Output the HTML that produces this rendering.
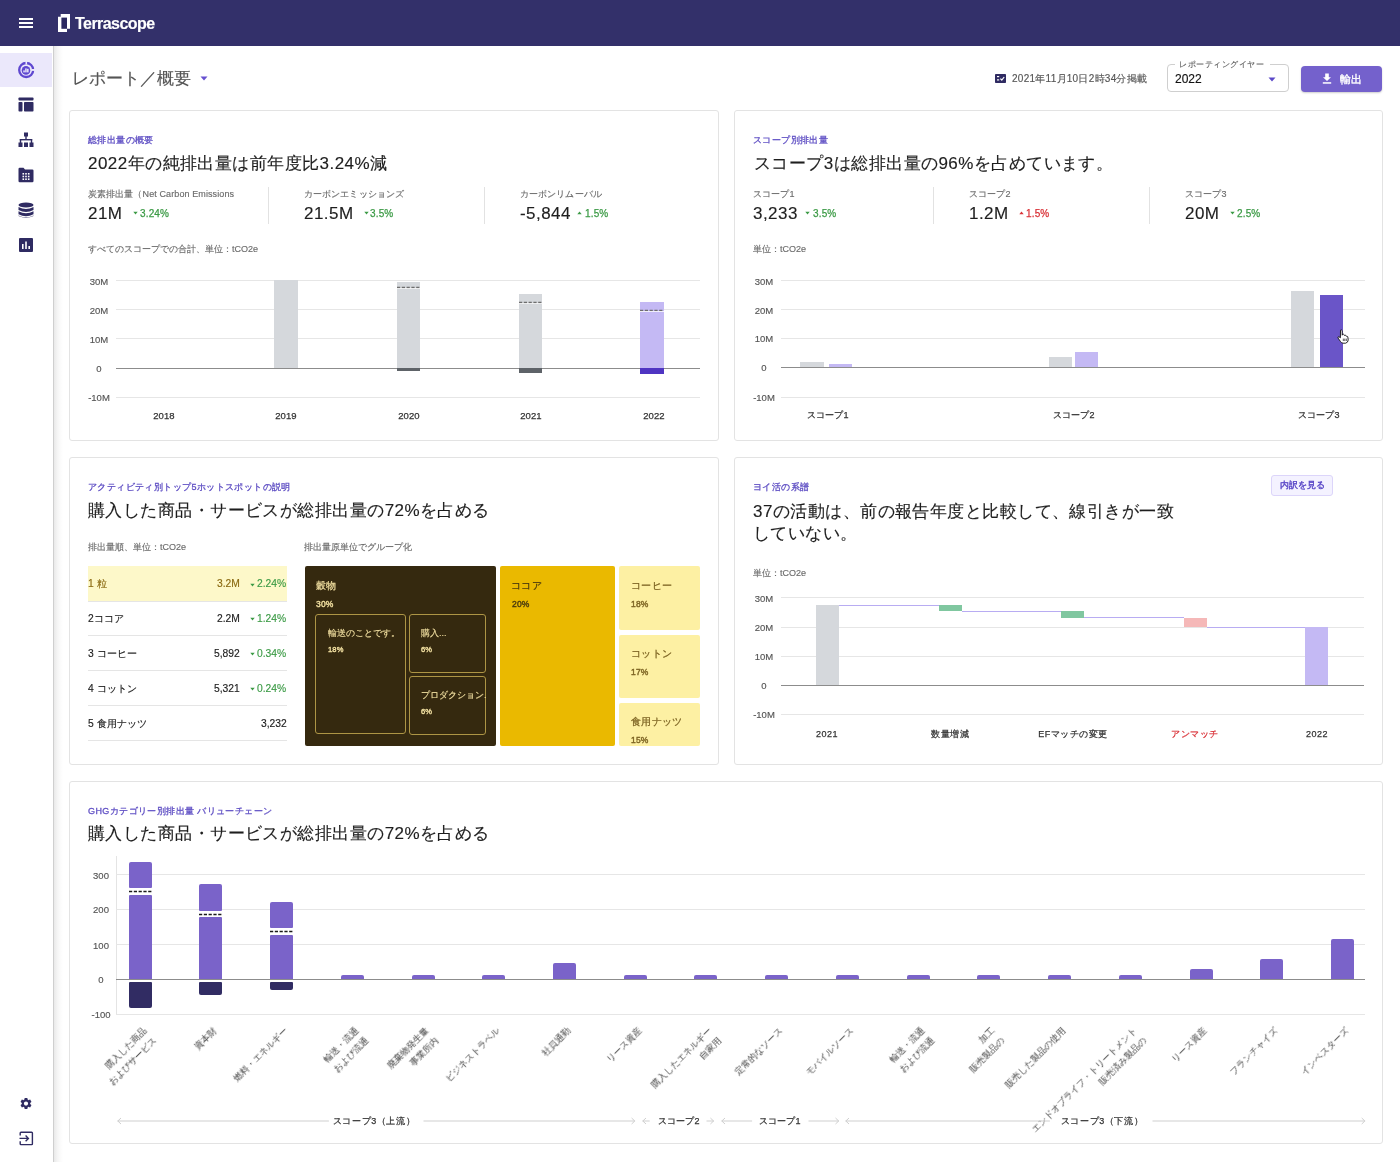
<!DOCTYPE html>
<html lang="ja"><head><meta charset="utf-8"><title>Terrascope</title>
<style>
*{box-sizing:border-box;margin:0;padding:0}
html,body{width:1400px;height:1162px;overflow:hidden;background:#fff;font-family:"Liberation Sans",sans-serif}
.t{position:absolute;white-space:nowrap;will-change:transform;-webkit-text-stroke:0.15px currentColor}
.a{position:absolute}
.card{position:absolute;border:1px solid #e3e3e3;border-radius:3px;background:#fff}
svg{position:absolute;overflow:visible}
</style></head><body>

<div class="a" style="left:0;top:0;width:1400px;height:46px;background:#33306a"></div>
<div class="a" style="left:19px;top:18px;width:14px;height:2px;background:#fff"></div>
<div class="a" style="left:19px;top:22px;width:14px;height:2px;background:#fff"></div>
<div class="a" style="left:19px;top:26px;width:14px;height:2px;background:#fff"></div>
<svg style="left:57px;top:13px" width="14" height="20" viewBox="0 0 14 20">
<path d="M1 3.7 L3.7 3.7 L3.7 1.1 L13 1.1 L13 15.8 L10 15.8 L10 19 L1 19 Z" fill="#fff"/>
<rect x="4.4" y="4.6" width="5.6" height="11.2" fill="#2a2760"/>
</svg>
<div class="t" style="left:75px;top:16.2px;font-size:16px;line-height:16px;color:#fff;font-weight:bold;letter-spacing:-0.55px;">Terrascope</div>
<div class="a" style="left:0;top:46px;width:53px;height:1116px;background:#fff"></div>
<div class="a" style="left:52.6px;top:46px;width:1.2px;height:1116px;background:#cfcfcf"></div>
<div class="a" style="left:53.8px;top:46px;width:9px;height:1116px;background:linear-gradient(to right,#e9e9e9,#f4f4f4 35%,#fafafa 65%,#fff)"></div>
<div class="a" style="left:0;top:53px;width:52px;height:34px;background:#ebe8fb"></div>
<svg style="left:17px;top:61px" width="18" height="18" viewBox="0 0 18 18">
<circle cx="9.2" cy="9" r="7" fill="none" stroke="#5f48d0" stroke-width="2.3"/>
<rect x="8.5" y="0" width="1.6" height="3.5" fill="#ebe8fb"/><rect x="14.5" y="8" width="3.5" height="1.9" fill="#ebe8fb"/>
<circle cx="9" cy="9.4" r="4.3" fill="#5f48d0"/>
<rect x="6.4" y="9.4" width="1.3" height="2" fill="#fff"/><rect x="8.3" y="7.4" width="1.3" height="4" fill="#fff"/><rect x="10.2" y="7.8" width="1.3" height="3.6" fill="#fff"/>
</svg>
<svg style="left:18px;top:97px" width="16" height="15" viewBox="0 0 16 15">
<rect x="0.5" y="0.5" width="15" height="3" rx="0.8" fill="#2f2b62"/>
<rect x="0.5" y="5" width="4" height="9.5" rx="0.8" fill="#2f2b62"/>
<rect x="6" y="5" width="9.5" height="9.5" rx="0.8" fill="#2f2b62"/>
</svg>
<svg style="left:18px;top:132px" width="16" height="16" viewBox="0 0 16 16">
<rect x="6" y="0.5" width="4" height="4" fill="#2f2b62"/>
<rect x="7.3" y="4" width="1.4" height="4" fill="#2f2b62"/>
<rect x="1.8" y="7" width="12.4" height="1.4" fill="#2f2b62"/>
<rect x="1.8" y="7" width="1.4" height="4" fill="#2f2b62"/><rect x="12.8" y="7" width="1.4" height="4" fill="#2f2b62"/>
<rect x="0.5" y="10.5" width="4" height="4.5" fill="#2f2b62"/><rect x="6" y="10.5" width="4" height="4.5" fill="#2f2b62"/><rect x="11.5" y="10.5" width="4" height="4.5" fill="#2f2b62"/>
</svg>
<svg style="left:18px;top:167px" width="16" height="16" viewBox="0 0 16 16">
<path d="M0.5 2 Q0.5 0.8 1.7 0.8 L5.5 0.8 L7 2.4 L14.3 2.4 Q15.5 2.4 15.5 3.6 L15.5 14 Q15.5 15.2 14.3 15.2 L1.7 15.2 Q0.5 15.2 0.5 14 Z" fill="#2f2b62"/>
<g fill="#fff"><rect x="4.5" y="6" width="1.6" height="1.6"/><rect x="7.2" y="6" width="1.6" height="1.6"/><rect x="9.9" y="6" width="1.6" height="1.6"/>
<rect x="4.5" y="8.7" width="1.6" height="1.6"/><rect x="7.2" y="8.7" width="1.6" height="1.6"/><rect x="9.9" y="8.7" width="1.6" height="1.6"/>
<rect x="4.5" y="11.4" width="1.6" height="1.6"/><rect x="7.2" y="11.4" width="1.6" height="1.6"/><rect x="9.9" y="11.4" width="1.6" height="1.6"/></g>
</svg>
<svg style="left:18px;top:202px" width="16" height="17" viewBox="0 0 16 17">
<ellipse cx="8" cy="3" rx="7.5" ry="2.6" fill="#2f2b62"/>
<path d="M0.5 5 Q8 9 15.5 5 L15.5 8 Q8 12 0.5 8 Z" fill="#2f2b62"/>
<path d="M0.5 9.2 Q8 13.2 15.5 9.2 L15.5 12.2 Q8 16.2 0.5 12.2 Z" fill="#2f2b62"/>
<path d="M0.5 13.4 Q8 17.2 15.5 13.4 L15.5 14 Q8 17.6 0.5 14 Z" fill="#2f2b62"/>
</svg>
<svg style="left:19px;top:238px" width="14" height="14" viewBox="0 0 14 14">
<rect x="0" y="0" width="14" height="14" rx="1" fill="#2f2b62"/>
<rect x="3" y="6" width="1.6" height="5" fill="#fff"/><rect x="6.2" y="3.5" width="1.6" height="7.5" fill="#fff"/><rect x="9.4" y="8" width="1.6" height="3" fill="#fff"/>
</svg>
<svg style="left:19px;top:1096px" width="14" height="15" viewBox="0 0 24 24">
<path fill="#2f2b62" d="M19.14 12.94c.04-.3.06-.61.06-.94 0-.32-.02-.64-.07-.94l2.03-1.58c.18-.14.23-.41.12-.61l-1.92-3.32c-.12-.22-.37-.29-.59-.22l-2.39.96c-.5-.38-1.03-.7-1.62-.94l-.36-2.54c-.04-.24-.24-.41-.48-.41h-3.84c-.24 0-.43.17-.47.41l-.36 2.54c-.59.24-1.13.57-1.62.94l-2.39-.96c-.22-.08-.47 0-.59.22L2.74 8.87c-.12.21-.08.47.12.61l2.03 1.58c-.05.3-.09.63-.09.94s.02.64.07.94l-2.03 1.58c-.18.14-.23.41-.12.61l1.92 3.32c.12.22.37.29.59.22l2.39-.96c.5.38 1.03.7 1.62.94l.36 2.54c.05.24.24.41.48.41h3.84c.24 0 .44-.17.47-.41l.36-2.54c.59-.24 1.13-.56 1.62-.94l2.39.96c.22.08.47 0 .59-.22l1.92-3.32c.12-.22.07-.47-.12-.61l-2.01-1.58zM12 15.6c-1.98 0-3.6-1.62-3.6-3.6s1.62-3.6 3.6-3.6 3.6 1.62 3.6 3.6-1.62 3.6-3.6 3.6z"/>
</svg>
<svg style="left:19px;top:1131px" width="15" height="15" viewBox="0 0 15 15">
<path d="M1.2 4.5 L1.2 2 Q1.2 1.2 2 1.2 L12.6 1.2 Q13.4 1.2 13.4 2 L13.4 12.8 Q13.4 13.6 12.6 13.6 L2 13.6 Q1.2 13.6 1.2 12.8 L1.2 10.2" fill="none" stroke="#2f2b62" stroke-width="1.4"/>
<path d="M0.5 7.4 L9.2 7.4 M6.6 4.6 L9.4 7.4 L6.6 10.2" fill="none" stroke="#2f2b62" stroke-width="1.4"/>
</svg>
<div class="t" style="left:71.5px;top:69.5px;font-size:17px;line-height:17px;color:#555;font-weight:normal;letter-spacing:0px;">レポート／概要</div>
<svg style="left:200px;top:76px" width="8" height="5" viewBox="0 0 8 5"><path d="M0.5 0.5 L7.5 0.5 L4 4.5 Z" fill="#6650d0"/></svg>
<svg style="left:995px;top:74px" width="11" height="9" viewBox="0 0 11 9">
<rect x="0" y="0" width="11" height="9" rx="0.8" fill="#2f2b62"/>
<rect x="2" y="2" width="2.2" height="1.2" fill="#fff"/><rect x="2" y="5.3" width="2.2" height="1.2" fill="#fff"/>
<path d="M5.4 4.6 L6.8 6 L9.2 3" fill="none" stroke="#fff" stroke-width="1.2"/>
</svg>
<div class="t" style="left:1012px;top:73.8px;font-size:10px;line-height:10px;color:#555;font-weight:normal;letter-spacing:0.27px;">2021年11月10日2時34分掲載</div>
<div class="a" style="left:1167px;top:64px;width:122px;height:28px;border:1px solid #cfcfcf;border-radius:4px"></div>
<div class="a" style="left:1175px;top:60px;width:95px;height:8px;background:#fff"></div>
<div class="t" style="left:1179px;top:60.5px;font-size:8px;line-height:8px;color:#666;font-weight:normal;letter-spacing:0.55px;">レポーティングイヤー</div>
<div class="t" style="left:1175px;top:73px;font-size:12px;line-height:12px;color:#111;font-weight:normal;letter-spacing:0px;">2022</div>
<svg style="left:1268px;top:77px" width="8" height="5" viewBox="0 0 8 5"><path d="M0.5 0.5 L7.5 0.5 L4 4.5 Z" fill="#5b48c8"/></svg>
<div class="a" style="left:1301px;top:66px;width:81px;height:26px;background:#7461cc;border-radius:4px;box-shadow:0 1px 2px rgba(0,0,0,0.2)"></div>
<svg style="left:1322px;top:73px" width="10" height="11" viewBox="0 0 10 11">
<path d="M3.2 0.5 L6.8 0.5 L6.8 4.2 L9 4.2 L5 8 L1 4.2 L3.2 4.2 Z" fill="#fff"/><rect x="0.8" y="9.2" width="8.4" height="1.5" fill="#fff"/>
</svg>
<div class="t" style="left:1340px;top:74px;font-size:10.5px;line-height:10.5px;color:#fff;font-weight:normal;letter-spacing:0.2px;-webkit-text-stroke:0.35px #fff">輸出</div>
<div class="card" style="left:69px;top:110px;width:650px;height:331px"></div>
<div class="t" style="left:88px;top:136px;font-size:9px;line-height:9px;color:#6050c4;font-weight:normal;letter-spacing:0.4px;-webkit-text-stroke:0.3px currentColor">総排出量の概要</div>
<div class="t" style="left:88px;top:155px;font-size:17px;line-height:17px;color:#1e1e1e;font-weight:normal;letter-spacing:0.45px;">2022年の純排出量は前年度比3.24%減</div>
<div class="t" style="left:88px;top:189.5px;font-size:9px;line-height:9px;color:#6b6b6b;font-weight:normal;letter-spacing:0.1px;">炭素排出量（Net Carbon Emissions</div>
<div class="t" style="left:88px;top:205px;font-size:17px;line-height:17px;color:#1e1e1e;font-weight:normal;letter-spacing:0.45px;">21M</div>
<svg style="left:133px;top:211px" width="5" height="4" viewBox="0 0 5 4"><path d="M0.3 0.8 L4.7 0.8 L2.5 3.4 Z" fill="#3b9a45"/></svg>
<div class="t" style="left:140px;top:208.5px;font-size:10px;line-height:10px;color:#3b9a45;font-weight:normal;letter-spacing:0.15px;-webkit-text-stroke:0.25px currentColor">3.24%</div>
<div class="t" style="left:304px;top:189.5px;font-size:9px;line-height:9px;color:#6b6b6b;font-weight:normal;letter-spacing:0.1px;">カーボンエミッションズ</div>
<div class="t" style="left:304px;top:205px;font-size:17px;line-height:17px;color:#1e1e1e;font-weight:normal;letter-spacing:0.45px;">21.5M</div>
<svg style="left:364px;top:211px" width="5" height="4" viewBox="0 0 5 4"><path d="M0.3 0.8 L4.7 0.8 L2.5 3.4 Z" fill="#3b9a45"/></svg>
<div class="t" style="left:370px;top:208.5px;font-size:10px;line-height:10px;color:#3b9a45;font-weight:normal;letter-spacing:0.15px;-webkit-text-stroke:0.25px currentColor">3.5%</div>
<div class="t" style="left:520px;top:189.5px;font-size:9px;line-height:9px;color:#6b6b6b;font-weight:normal;letter-spacing:0.1px;">カーボンリムーバル</div>
<div class="t" style="left:520px;top:205px;font-size:17px;line-height:17px;color:#1e1e1e;font-weight:normal;letter-spacing:0.45px;">-5,844</div>
<svg style="left:577px;top:211px" width="5" height="4" viewBox="0 0 5 4"><path d="M0.3 3.2 L4.7 3.2 L2.5 0.6 Z" fill="#3b9a45"/></svg>
<div class="t" style="left:585px;top:208.5px;font-size:10px;line-height:10px;color:#3b9a45;font-weight:normal;letter-spacing:0.15px;-webkit-text-stroke:0.25px currentColor">1.5%</div>
<div class="a" style="left:268px;top:187px;width:1px;height:37px;background:#e2e2e2"></div>
<div class="a" style="left:484px;top:187px;width:1px;height:37px;background:#e2e2e2"></div>
<div class="t" style="left:88px;top:245px;font-size:9px;line-height:9px;color:#6b6b6b;font-weight:normal;letter-spacing:0px;">すべてのスコープでの合計、単位：tCO2e</div>
<div class="a" style="left:116px;top:280.0px;width:584px;height:1px;background:#e6e6e6"></div>
<div class="t" style="left:-1px;width:200px;top:276.5px;font-size:9.5px;line-height:9.5px;color:#555;font-weight:normal;letter-spacing:0px;text-align:center;">30M</div>
<div class="a" style="left:116px;top:309.1px;width:584px;height:1px;background:#e6e6e6"></div>
<div class="t" style="left:-1px;width:200px;top:305.6px;font-size:9.5px;line-height:9.5px;color:#555;font-weight:normal;letter-spacing:0px;text-align:center;">20M</div>
<div class="a" style="left:116px;top:338.2px;width:584px;height:1px;background:#e6e6e6"></div>
<div class="t" style="left:-1px;width:200px;top:334.7px;font-size:9.5px;line-height:9.5px;color:#555;font-weight:normal;letter-spacing:0px;text-align:center;">10M</div>
<div class="a" style="left:116px;top:367.5px;width:584px;height:1.1px;background:#8c8c8c"></div>
<div class="t" style="left:-1px;width:200px;top:364px;font-size:9.5px;line-height:9.5px;color:#555;font-weight:normal;letter-spacing:0px;text-align:center;">0</div>
<div class="a" style="left:116px;top:396.5px;width:584px;height:1px;background:#e6e6e6"></div>
<div class="t" style="left:-1px;width:200px;top:393px;font-size:9.5px;line-height:9.5px;color:#555;font-weight:normal;letter-spacing:0px;text-align:center;">-10M</div>
<div class="a" style="left:274.2px;top:280.4px;width:23.400000000000034px;height:87.60000000000002px;background:#d5d8dc;"></div>
<div class="a" style="left:396.7px;top:281.8px;width:23.400000000000034px;height:86.19999999999999px;background:#d5d8dc;"></div>
<svg style="left:396.7px;top:285.5px" width="23.400000000000034" height="3"><line x1="0" y1="1.5" x2="23.400000000000034" y2="1.5" stroke="#6e6e6e" stroke-width="1.6" stroke-dasharray="3.2 1.6"/></svg>
<div class="a" style="left:396.7px;top:288.2px;width:23.400000000000034px;height:1px;background:rgba(255,255,255,0.7)"></div>
<div class="a" style="left:396.7px;top:368px;width:23.400000000000034px;height:2.8000000000000114px;background:#5e6368;"></div>
<div class="a" style="left:518.6px;top:293.6px;width:23.399999999999977px;height:74.39999999999998px;background:#d5d8dc;"></div>
<svg style="left:518.6px;top:300.5px" width="23.399999999999977" height="3"><line x1="0" y1="1.5" x2="23.399999999999977" y2="1.5" stroke="#6e6e6e" stroke-width="1.6" stroke-dasharray="3.2 1.6"/></svg>
<div class="a" style="left:518.6px;top:303.2px;width:23.399999999999977px;height:1px;background:rgba(255,255,255,0.7)"></div>
<div class="a" style="left:518.6px;top:368px;width:23.399999999999977px;height:5.199999999999989px;background:#5e6368;"></div>
<div class="a" style="left:640.2px;top:302.3px;width:23.399999999999977px;height:65.69999999999999px;background:#c4b9f4;"></div>
<svg style="left:640.2px;top:308.5px" width="23.399999999999977" height="3"><line x1="0" y1="1.5" x2="23.399999999999977" y2="1.5" stroke="#6e6e6e" stroke-width="1.6" stroke-dasharray="3.2 1.6"/></svg>
<div class="a" style="left:640.2px;top:311.3px;width:23.399999999999977px;height:1px;background:rgba(255,255,255,0.8)"></div>
<div class="a" style="left:640.2px;top:368px;width:23.399999999999977px;height:6.399999999999977px;background:#4f35c2;"></div>
<div class="t" style="left:63.5px;width:200px;top:411px;font-size:9.5px;line-height:9.5px;color:#333;font-weight:normal;letter-spacing:0.1px;text-align:center;-webkit-text-stroke:0.25px currentColor">2018</div>
<div class="t" style="left:186px;width:200px;top:411px;font-size:9.5px;line-height:9.5px;color:#333;font-weight:normal;letter-spacing:0.1px;text-align:center;-webkit-text-stroke:0.25px currentColor">2019</div>
<div class="t" style="left:308.5px;width:200px;top:411px;font-size:9.5px;line-height:9.5px;color:#333;font-weight:normal;letter-spacing:0.1px;text-align:center;-webkit-text-stroke:0.25px currentColor">2020</div>
<div class="t" style="left:431px;width:200px;top:411px;font-size:9.5px;line-height:9.5px;color:#333;font-weight:normal;letter-spacing:0.1px;text-align:center;-webkit-text-stroke:0.25px currentColor">2021</div>
<div class="t" style="left:553.5px;width:200px;top:411px;font-size:9.5px;line-height:9.5px;color:#333;font-weight:normal;letter-spacing:0.1px;text-align:center;-webkit-text-stroke:0.25px currentColor">2022</div>
<div class="card" style="left:734px;top:110px;width:649px;height:331px"></div>
<div class="t" style="left:753px;top:136px;font-size:9px;line-height:9px;color:#6050c4;font-weight:normal;letter-spacing:0.4px;-webkit-text-stroke:0.3px currentColor">スコープ別排出量</div>
<div class="t" style="left:754px;top:155px;font-size:17px;line-height:17px;color:#1e1e1e;font-weight:normal;letter-spacing:0.45px;">スコープ3は総排出量の96%を占めています。</div>
<div class="t" style="left:753px;top:189.5px;font-size:9px;line-height:9px;color:#6b6b6b;font-weight:normal;letter-spacing:0.1px;">スコープ1</div>
<div class="t" style="left:753px;top:205px;font-size:17px;line-height:17px;color:#1e1e1e;font-weight:normal;letter-spacing:0.45px;">3,233</div>
<svg style="left:805px;top:211px" width="5" height="4" viewBox="0 0 5 4"><path d="M0.3 0.8 L4.7 0.8 L2.5 3.4 Z" fill="#3b9a45"/></svg>
<div class="t" style="left:813px;top:208.5px;font-size:10px;line-height:10px;color:#3b9a45;font-weight:normal;letter-spacing:0.15px;-webkit-text-stroke:0.25px currentColor">3.5%</div>
<div class="t" style="left:969px;top:189.5px;font-size:9px;line-height:9px;color:#6b6b6b;font-weight:normal;letter-spacing:0.1px;">スコープ2</div>
<div class="t" style="left:969px;top:205px;font-size:17px;line-height:17px;color:#1e1e1e;font-weight:normal;letter-spacing:0.45px;">1.2M</div>
<svg style="left:1019px;top:211px" width="5" height="4" viewBox="0 0 5 4"><path d="M0.3 3.2 L4.7 3.2 L2.5 0.6 Z" fill="#d93036"/></svg>
<div class="t" style="left:1026px;top:208.5px;font-size:10px;line-height:10px;color:#d93036;font-weight:normal;letter-spacing:0.15px;-webkit-text-stroke:0.25px currentColor">1.5%</div>
<div class="t" style="left:1185px;top:189.5px;font-size:9px;line-height:9px;color:#6b6b6b;font-weight:normal;letter-spacing:0.1px;">スコープ3</div>
<div class="t" style="left:1185px;top:205px;font-size:17px;line-height:17px;color:#1e1e1e;font-weight:normal;letter-spacing:0.45px;">20M</div>
<svg style="left:1230px;top:211px" width="5" height="4" viewBox="0 0 5 4"><path d="M0.3 0.8 L4.7 0.8 L2.5 3.4 Z" fill="#3b9a45"/></svg>
<div class="t" style="left:1237px;top:208.5px;font-size:10px;line-height:10px;color:#3b9a45;font-weight:normal;letter-spacing:0.15px;-webkit-text-stroke:0.25px currentColor">2.5%</div>
<div class="a" style="left:932.5px;top:187px;width:1px;height:37px;background:#e2e2e2"></div>
<div class="a" style="left:1148.5px;top:187px;width:1px;height:37px;background:#e2e2e2"></div>
<div class="t" style="left:753px;top:245px;font-size:9px;line-height:9px;color:#6b6b6b;font-weight:normal;letter-spacing:0px;">単位：tCO2e</div>
<div class="a" style="left:781px;top:280.0px;width:584px;height:1px;background:#e6e6e6"></div>
<div class="t" style="left:664px;width:200px;top:276.5px;font-size:9.5px;line-height:9.5px;color:#555;font-weight:normal;letter-spacing:0px;text-align:center;">30M</div>
<div class="a" style="left:781px;top:309.1px;width:584px;height:1px;background:#e6e6e6"></div>
<div class="t" style="left:664px;width:200px;top:305.6px;font-size:9.5px;line-height:9.5px;color:#555;font-weight:normal;letter-spacing:0px;text-align:center;">20M</div>
<div class="a" style="left:781px;top:337.9px;width:584px;height:1px;background:#e6e6e6"></div>
<div class="t" style="left:664px;width:200px;top:334.4px;font-size:9.5px;line-height:9.5px;color:#555;font-weight:normal;letter-spacing:0px;text-align:center;">10M</div>
<div class="a" style="left:781px;top:366.9px;width:584px;height:1.1px;background:#8c8c8c"></div>
<div class="t" style="left:664px;width:200px;top:363.4px;font-size:9.5px;line-height:9.5px;color:#555;font-weight:normal;letter-spacing:0px;text-align:center;">0</div>
<div class="a" style="left:781px;top:396.5px;width:584px;height:1px;background:#e6e6e6"></div>
<div class="t" style="left:664px;width:200px;top:393px;font-size:9.5px;line-height:9.5px;color:#555;font-weight:normal;letter-spacing:0px;text-align:center;">-10M</div>
<div class="a" style="left:800.4px;top:361.5px;width:23.200000000000045px;height:5.899999999999977px;background:#d5d8dc;"></div>
<div class="a" style="left:829.2px;top:363.6px;width:23.0px;height:3.7999999999999545px;background:#c4b9f4;"></div>
<div class="a" style="left:1048.6px;top:357px;width:23.200000000000045px;height:10.399999999999977px;background:#d5d8dc;"></div>
<div class="a" style="left:1074.7px;top:352px;width:23.0px;height:15.399999999999977px;background:#c4b9f4;"></div>
<div class="a" style="left:1290.6px;top:290.7px;width:23.200000000000045px;height:76.69999999999999px;background:#d5d8dc;"></div>
<div class="a" style="left:1319.7px;top:295.3px;width:23.0px;height:72.09999999999997px;background:#6a55c8;"></div>
<div class="t" style="left:728px;width:200px;top:411px;font-size:9px;line-height:9px;color:#333;font-weight:normal;letter-spacing:0px;text-align:center;-webkit-text-stroke:0.25px currentColor">スコープ1</div>
<div class="t" style="left:973.5px;width:200px;top:411px;font-size:9px;line-height:9px;color:#333;font-weight:normal;letter-spacing:0px;text-align:center;-webkit-text-stroke:0.25px currentColor">スコープ2</div>
<div class="t" style="left:1218.5px;width:200px;top:411px;font-size:9px;line-height:9px;color:#333;font-weight:normal;letter-spacing:0px;text-align:center;-webkit-text-stroke:0.25px currentColor">スコープ3</div>
<svg style="left:1337px;top:329px" width="13" height="15" viewBox="0 0 13 15">
<path d="M3.5 1.2 Q4.6 0.6 5.2 1.6 L5.2 6.2 L5.6 5.4 Q6.6 4.8 7.2 5.8 L7.4 6.4 Q8.4 5.8 9 6.8 L9.2 7.2 Q10.2 6.8 10.8 7.8 L11.2 11 Q11 13.6 8.6 14.2 L6 14.2 Q4.4 14 3.4 12.4 L1 9 Q0.6 7.8 1.8 7.6 L3.4 8.8 Z" fill="#fff" stroke="#111" stroke-width="0.9"/>
<path d="M6.3 9.6 L6.3 12 M7.8 9.6 L7.8 12 M9.3 9.6 L9.3 12" stroke="#111" stroke-width="0.7"/>
</svg>
<div class="card" style="left:69px;top:457px;width:650px;height:308px"></div>
<div class="t" style="left:88px;top:483px;font-size:9px;line-height:9px;color:#6050c4;font-weight:normal;letter-spacing:0.4px;-webkit-text-stroke:0.3px currentColor">アクティビティ別トップ5ホットスポットの説明</div>
<div class="t" style="left:88px;top:501.5px;font-size:17px;line-height:17px;color:#1e1e1e;font-weight:normal;letter-spacing:0.45px;">購入した商品・サービスが総排出量の72%を占める</div>
<div class="t" style="left:88px;top:542.5px;font-size:9px;line-height:9px;color:#6b6b6b;font-weight:normal;letter-spacing:0px;">排出量順、単位：tCO2e</div>
<div class="t" style="left:304px;top:542.5px;font-size:9px;line-height:9px;color:#6b6b6b;font-weight:normal;letter-spacing:0px;">排出量原単位でグループ化</div>
<div class="a" style="left:88px;top:566px;width:198.5px;height:34.5px;background:#fdf8c9;"></div>
<div class="a" style="left:88px;top:600.5px;width:198.5px;height:1px;background:#e5e5e5"></div>
<div class="t" style="left:88px;top:579.0px;font-size:10.3px;line-height:10.3px;color:#8a6a12;font-weight:normal;letter-spacing:0px;">1 粒</div>
<div class="t" style="right:1160.2px;top:579.0px;font-size:10.3px;line-height:10.3px;color:#8a6a12;font-weight:normal;letter-spacing:0px;text-align:right;">3.2M</div>
<svg style="left:250px;top:582.5px" width="5" height="4" viewBox="0 0 5 4"><path d="M0.3 0.8 L4.7 0.8 L2.5 3.4 Z" fill="#3b9a45"/></svg>
<div class="t" style="right:1113.7px;top:579.0px;font-size:10.3px;line-height:10.3px;color:#3b9a45;font-weight:normal;letter-spacing:0px;text-align:right;">2.24%</div>
<div class="a" style="left:88px;top:635.4px;width:198.5px;height:1px;background:#e5e5e5"></div>
<div class="t" style="left:88px;top:613.9px;font-size:10.3px;line-height:10.3px;color:#222;font-weight:normal;letter-spacing:0px;">2ココア</div>
<div class="t" style="right:1160.2px;top:613.9px;font-size:10.3px;line-height:10.3px;color:#222;font-weight:normal;letter-spacing:0px;text-align:right;">2.2M</div>
<svg style="left:250px;top:617.4px" width="5" height="4" viewBox="0 0 5 4"><path d="M0.3 0.8 L4.7 0.8 L2.5 3.4 Z" fill="#3b9a45"/></svg>
<div class="t" style="right:1113.7px;top:613.9px;font-size:10.3px;line-height:10.3px;color:#3b9a45;font-weight:normal;letter-spacing:0px;text-align:right;">1.24%</div>
<div class="a" style="left:88px;top:670.3px;width:198.5px;height:1px;background:#e5e5e5"></div>
<div class="t" style="left:88px;top:648.8px;font-size:10.3px;line-height:10.3px;color:#222;font-weight:normal;letter-spacing:0px;">3 コーヒー</div>
<div class="t" style="right:1160.2px;top:648.8px;font-size:10.3px;line-height:10.3px;color:#222;font-weight:normal;letter-spacing:0px;text-align:right;">5,892</div>
<svg style="left:250px;top:652.3px" width="5" height="4" viewBox="0 0 5 4"><path d="M0.3 0.8 L4.7 0.8 L2.5 3.4 Z" fill="#3b9a45"/></svg>
<div class="t" style="right:1113.7px;top:648.8px;font-size:10.3px;line-height:10.3px;color:#3b9a45;font-weight:normal;letter-spacing:0px;text-align:right;">0.34%</div>
<div class="a" style="left:88px;top:705.2px;width:198.5px;height:1px;background:#e5e5e5"></div>
<div class="t" style="left:88px;top:683.7px;font-size:10.3px;line-height:10.3px;color:#222;font-weight:normal;letter-spacing:0px;">4 コットン</div>
<div class="t" style="right:1160.2px;top:683.7px;font-size:10.3px;line-height:10.3px;color:#222;font-weight:normal;letter-spacing:0px;text-align:right;">5,321</div>
<svg style="left:250px;top:687.2px" width="5" height="4" viewBox="0 0 5 4"><path d="M0.3 0.8 L4.7 0.8 L2.5 3.4 Z" fill="#3b9a45"/></svg>
<div class="t" style="right:1113.7px;top:683.7px;font-size:10.3px;line-height:10.3px;color:#3b9a45;font-weight:normal;letter-spacing:0px;text-align:right;">0.24%</div>
<div class="a" style="left:88px;top:740.1px;width:198.5px;height:1px;background:#e5e5e5"></div>
<div class="t" style="left:88px;top:718.6px;font-size:10.3px;line-height:10.3px;color:#222;font-weight:normal;letter-spacing:0px;">5 食用ナッツ</div>
<div class="t" style="right:1113.7px;top:718.6px;font-size:10.3px;line-height:10.3px;color:#222;font-weight:normal;letter-spacing:0px;text-align:right;">3,232</div>
<div class="a" style="left:304.5px;top:566px;width:191.5px;height:180px;background:#35290f;border-radius:2px"></div>
<div class="t" style="left:315.5px;top:580.5px;font-size:10px;line-height:10px;color:#f1dfa0;font-weight:normal;letter-spacing:0.3px;-webkit-text-stroke:0.25px currentColor">穀物</div>
<div class="t" style="left:315.5px;top:599.5px;font-size:8.5px;line-height:8.5px;color:#f1dfa0;font-weight:normal;letter-spacing:0.2px;-webkit-text-stroke:0.4px currentColor">30%</div>
<div class="a" style="left:315.3px;top:613.9px;width:90.69999999999999px;height:120.60000000000002px;border:1.8px solid #ad9545;border-radius:3px"></div>
<div class="a" style="left:409px;top:613.9px;width:76.69999999999999px;height:59.5px;border:1.8px solid #ad9545;border-radius:3px"></div>
<div class="a" style="left:409px;top:675.5px;width:76.69999999999999px;height:59.0px;border:1.8px solid #ad9545;border-radius:3px"></div>
<div class="t" style="left:327.5px;top:628.5px;font-size:9px;line-height:9px;color:#f1dfa0;font-weight:normal;letter-spacing:0px;">輸送のことです。</div>
<div class="t" style="left:327.5px;top:645.5px;font-size:7.5px;line-height:7.5px;color:#f1dfa0;font-weight:normal;letter-spacing:0.2px;-webkit-text-stroke:0.4px currentColor">18%</div>
<div class="t" style="left:420.5px;top:628.5px;font-size:9px;line-height:9px;color:#f1dfa0;font-weight:normal;letter-spacing:0px;">購入...</div>
<div class="t" style="left:420.5px;top:645.5px;font-size:7.5px;line-height:7.5px;color:#f1dfa0;font-weight:normal;letter-spacing:0.2px;-webkit-text-stroke:0.4px currentColor">6%</div>
<div class="t" style="left:420.5px;top:690.5px;font-size:9px;line-height:9px;color:#f1dfa0;font-weight:normal;letter-spacing:0px;">プロダクション.</div>
<div class="t" style="left:420.5px;top:707.5px;font-size:7.5px;line-height:7.5px;color:#f1dfa0;font-weight:normal;letter-spacing:0.2px;-webkit-text-stroke:0.4px currentColor">6%</div>
<div class="a" style="left:488px;top:680px;width:8px;height:40px;background:#35290f"></div>
<div class="a" style="left:500px;top:566px;width:115.10000000000002px;height:180px;background:#eab900;border-radius:2px"></div>
<div class="t" style="left:511px;top:580.5px;font-size:10px;line-height:10px;color:#4b3b0e;font-weight:normal;letter-spacing:0.3px;-webkit-text-stroke:0.25px currentColor">ココア</div>
<div class="t" style="left:511.5px;top:599.5px;font-size:8.5px;line-height:8.5px;color:#4b3b0e;font-weight:normal;letter-spacing:0.2px;-webkit-text-stroke:0.4px currentColor">20%</div>
<div class="a" style="left:618.7px;top:566.2px;width:81.29999999999995px;height:64.19999999999993px;background:#fdf0a3;border-radius:2px"></div>
<div class="a" style="left:618.7px;top:634.5px;width:81.29999999999995px;height:63.89999999999998px;background:#fdf0a3;border-radius:2px"></div>
<div class="a" style="left:618.7px;top:702.7px;width:81.29999999999995px;height:43.299999999999955px;background:#fdf0a3;border-radius:2px"></div>
<div class="t" style="left:630.5px;top:580.5px;font-size:10px;line-height:10px;color:#7d6423;font-weight:normal;letter-spacing:0.3px;-webkit-text-stroke:0.25px currentColor">コーヒー</div>
<div class="t" style="left:630.8px;top:599.5px;font-size:8.5px;line-height:8.5px;color:#7d6423;font-weight:normal;letter-spacing:0.2px;-webkit-text-stroke:0.4px currentColor">18%</div>
<div class="t" style="left:630.5px;top:648.5px;font-size:10px;line-height:10px;color:#7d6423;font-weight:normal;letter-spacing:0.3px;-webkit-text-stroke:0.25px currentColor">コットン</div>
<div class="t" style="left:630.8px;top:667.5px;font-size:8.5px;line-height:8.5px;color:#7d6423;font-weight:normal;letter-spacing:0.2px;-webkit-text-stroke:0.4px currentColor">17%</div>
<div class="t" style="left:630.5px;top:716.5px;font-size:10px;line-height:10px;color:#7d6423;font-weight:normal;letter-spacing:0.3px;-webkit-text-stroke:0.25px currentColor">食用ナッツ</div>
<div class="t" style="left:630.8px;top:735.5px;font-size:8.5px;line-height:8.5px;color:#7d6423;font-weight:normal;letter-spacing:0.2px;-webkit-text-stroke:0.4px currentColor">15%</div>
<div class="card" style="left:734px;top:457px;width:649px;height:308px"></div>
<div class="t" style="left:752.5px;top:483px;font-size:9px;line-height:9px;color:#6050c4;font-weight:normal;letter-spacing:0.4px;-webkit-text-stroke:0.3px currentColor">ヨイ活の系譜</div>
<div class="a" style="left:1270.5px;top:474.5px;width:62px;height:21.5px;background:#f4f2ff;border:1px solid #dcd5fa;border-radius:3px"></div>
<div class="t" style="left:1201.5px;width:200px;top:481px;font-size:9px;line-height:9px;color:#5a48c8;font-weight:normal;letter-spacing:0px;text-align:center;-webkit-text-stroke:0.4px currentColor">内訳を見る</div>
<div class="t" style="left:752.5px;top:501px;font-size:17px;letter-spacing:0.45px;line-height:22px;color:#1e1e1e">37の活動は、前の報告年度と比較して、線引きが一致<br>していない。</div>
<div class="t" style="left:752.5px;top:569px;font-size:9px;line-height:9px;color:#6b6b6b;font-weight:normal;letter-spacing:0px;">単位：tCO2e</div>
<div class="a" style="left:781px;top:597.2px;width:583px;height:1px;background:#e6e6e6"></div>
<div class="t" style="left:663.5px;width:200px;top:593.7px;font-size:9.5px;line-height:9.5px;color:#555;font-weight:normal;letter-spacing:0px;text-align:center;">30M</div>
<div class="a" style="left:781px;top:626.6px;width:583px;height:1px;background:#e6e6e6"></div>
<div class="t" style="left:663.5px;width:200px;top:623.1px;font-size:9.5px;line-height:9.5px;color:#555;font-weight:normal;letter-spacing:0px;text-align:center;">20M</div>
<div class="a" style="left:781px;top:655.6px;width:583px;height:1px;background:#e6e6e6"></div>
<div class="t" style="left:663.5px;width:200px;top:652.1px;font-size:9.5px;line-height:9.5px;color:#555;font-weight:normal;letter-spacing:0px;text-align:center;">10M</div>
<div class="a" style="left:781px;top:684.9px;width:583px;height:1.1px;background:#8c8c8c"></div>
<div class="t" style="left:663.5px;width:200px;top:681.4px;font-size:9.5px;line-height:9.5px;color:#555;font-weight:normal;letter-spacing:0px;text-align:center;">0</div>
<div class="a" style="left:781px;top:713.9px;width:583px;height:1px;background:#e6e6e6"></div>
<div class="t" style="left:663.5px;width:200px;top:710.4px;font-size:9.5px;line-height:9.5px;color:#555;font-weight:normal;letter-spacing:0px;text-align:center;">-10M</div>
<div class="a" style="left:815.7px;top:605.2px;width:23.0px;height:79.79999999999995px;background:#d5d8dc;"></div>
<div class="a" style="left:838.7px;top:605px;width:100.09999999999991px;height:1.2px;background:#b8acf2"></div>
<div class="a" style="left:938.8px;top:605.2px;width:22.800000000000068px;height:5.899999999999977px;background:#80c7a0;"></div>
<div class="a" style="left:961.6px;top:610.6px;width:99.49999999999989px;height:1.2px;background:#b8acf2"></div>
<div class="a" style="left:1061.1px;top:610.8px;width:23.100000000000136px;height:6.800000000000068px;background:#80c7a0;"></div>
<div class="a" style="left:1084.2px;top:617.2px;width:99.79999999999995px;height:1.2px;background:#b8acf2"></div>
<div class="a" style="left:1184px;top:617.6px;width:22.90000000000009px;height:9.299999999999955px;background:#f5b8b8;"></div>
<div class="a" style="left:1206.9px;top:626.6px;width:98.5px;height:1.2px;background:#b8acf2"></div>
<div class="a" style="left:1305.4px;top:627.4px;width:23.0px;height:57.60000000000002px;background:#c4b9f4;"></div>
<div class="t" style="left:727px;width:200px;top:730px;font-size:9px;line-height:9px;color:#333;font-weight:normal;letter-spacing:0.5px;text-align:center;-webkit-text-stroke:0.25px currentColor">2021</div>
<div class="t" style="left:850px;width:200px;top:730px;font-size:9px;line-height:9px;color:#333;font-weight:normal;letter-spacing:0.5px;text-align:center;-webkit-text-stroke:0.25px currentColor">数量増減</div>
<div class="t" style="left:972.5999999999999px;width:200px;top:730px;font-size:9px;line-height:9px;color:#333;font-weight:normal;letter-spacing:0.5px;text-align:center;-webkit-text-stroke:0.25px currentColor">EFマッチの変更</div>
<div class="t" style="left:1095.4px;width:200px;top:730px;font-size:9px;line-height:9px;color:#d93036;font-weight:normal;letter-spacing:0.5px;text-align:center;-webkit-text-stroke:0.25px currentColor">アンマッチ</div>
<div class="t" style="left:1217px;width:200px;top:730px;font-size:9px;line-height:9px;color:#333;font-weight:normal;letter-spacing:0.5px;text-align:center;-webkit-text-stroke:0.25px currentColor">2022</div>
<div class="card" style="left:69px;top:781px;width:1314px;height:363px"></div>
<div class="t" style="left:88px;top:807px;font-size:9px;line-height:9px;color:#6050c4;font-weight:normal;letter-spacing:0.4px;-webkit-text-stroke:0.3px currentColor">GHGカテゴリー別排出量 バリューチェーン</div>
<div class="t" style="left:88px;top:825px;font-size:17px;line-height:17px;color:#1e1e1e;font-weight:normal;letter-spacing:0.45px;">購入した商品・サービスが総排出量の72%を占める</div>
<div class="a" style="left:116px;top:856px;width:1px;height:159px;background:#e4e4e4"></div>
<div class="a" style="left:116.4px;top:874.0px;width:1248.6px;height:1px;background:#e6e6e6"></div>
<div class="t" style="left:0.5px;width:200px;top:870.5px;font-size:9.5px;line-height:9.5px;color:#555;font-weight:normal;letter-spacing:0px;text-align:center;">300</div>
<div class="a" style="left:116.4px;top:908.9px;width:1248.6px;height:1px;background:#e6e6e6"></div>
<div class="t" style="left:0.5px;width:200px;top:905.4px;font-size:9.5px;line-height:9.5px;color:#555;font-weight:normal;letter-spacing:0px;text-align:center;">200</div>
<div class="a" style="left:116.4px;top:944.1px;width:1248.6px;height:1px;background:#e6e6e6"></div>
<div class="t" style="left:0.5px;width:200px;top:940.6px;font-size:9.5px;line-height:9.5px;color:#555;font-weight:normal;letter-spacing:0px;text-align:center;">100</div>
<div class="a" style="left:116.4px;top:978.9px;width:1248.6px;height:1.1px;background:#8c8c8c"></div>
<div class="t" style="left:0.5px;width:200px;top:975.4px;font-size:9.5px;line-height:9.5px;color:#555;font-weight:normal;letter-spacing:0px;text-align:center;">0</div>
<div class="a" style="left:116.4px;top:1013.9px;width:1248.6px;height:1px;background:#e6e6e6"></div>
<div class="t" style="left:0.5px;width:200px;top:1010.4px;font-size:9.5px;line-height:9.5px;color:#555;font-weight:normal;letter-spacing:0px;text-align:center;">-100</div>
<div class="a" style="left:128.7px;top:861.7px;width:23.0px;height:26.699999999999932px;background:#7a63c9;border-radius:2px 2px 1px 1px"></div>
<svg style="left:128.7px;top:890.1px" width="23.0" height="3"><line x1="0" y1="1.5" x2="23.0" y2="1.5" stroke="#1a1a1a" stroke-width="1.6" stroke-dasharray="3.2 1.6"/></svg>
<div class="a" style="left:128.7px;top:894.7px;width:23.0px;height:84.29999999999995px;background:#7a63c9;border-radius:1px 1px 0 0"></div>
<div class="a" style="left:128.7px;top:982px;width:23.0px;height:25.700000000000045px;background:#312c63;border-radius:1px 1px 2px 2px"></div>
<div class="a" style="left:199.42px;top:884.4px;width:23.0px;height:26.200000000000045px;background:#7a63c9;border-radius:2px 2px 1px 1px"></div>
<svg style="left:199.42px;top:912.8px" width="23.0" height="3"><line x1="0" y1="1.5" x2="23.0" y2="1.5" stroke="#1a1a1a" stroke-width="1.6" stroke-dasharray="3.2 1.6"/></svg>
<div class="a" style="left:199.42px;top:917.3px;width:23.0px;height:61.700000000000045px;background:#7a63c9;border-radius:1px 1px 0 0"></div>
<div class="a" style="left:199.42px;top:982px;width:23.0px;height:12.799999999999955px;background:#312c63;border-radius:1px 1px 2px 2px"></div>
<div class="a" style="left:270.14px;top:901.8px;width:23.0px;height:26.200000000000045px;background:#7a63c9;border-radius:2px 2px 1px 1px"></div>
<svg style="left:270.14px;top:930.2px" width="23.0" height="3"><line x1="0" y1="1.5" x2="23.0" y2="1.5" stroke="#1a1a1a" stroke-width="1.6" stroke-dasharray="3.2 1.6"/></svg>
<div class="a" style="left:270.14px;top:934.5px;width:23.0px;height:44.5px;background:#7a63c9;border-radius:1px 1px 0 0"></div>
<div class="a" style="left:270.14px;top:982px;width:23.0px;height:7.5px;background:#312c63;border-radius:1px 1px 2px 2px"></div>
<div class="a" style="left:340.86px;top:974.9px;width:23.0px;height:4.100000000000023px;background:#7a63c9;border-radius:2px 2px 0 0"></div>
<div class="a" style="left:411.58px;top:974.9px;width:23.0px;height:4.100000000000023px;background:#7a63c9;border-radius:2px 2px 0 0"></div>
<div class="a" style="left:482.3px;top:974.9px;width:23.0px;height:4.100000000000023px;background:#7a63c9;border-radius:2px 2px 0 0"></div>
<div class="a" style="left:553.02px;top:962.9px;width:23.0px;height:16.100000000000023px;background:#7a63c9;border-radius:2px 2px 0 0"></div>
<div class="a" style="left:623.74px;top:974.9px;width:23.0px;height:4.100000000000023px;background:#7a63c9;border-radius:2px 2px 0 0"></div>
<div class="a" style="left:694.46px;top:974.9px;width:23.0px;height:4.100000000000023px;background:#7a63c9;border-radius:2px 2px 0 0"></div>
<div class="a" style="left:765.1800000000001px;top:974.9px;width:23.0px;height:4.100000000000023px;background:#7a63c9;border-radius:2px 2px 0 0"></div>
<div class="a" style="left:835.9000000000001px;top:974.9px;width:23.0px;height:4.100000000000023px;background:#7a63c9;border-radius:2px 2px 0 0"></div>
<div class="a" style="left:906.6199999999999px;top:974.9px;width:23.0px;height:4.100000000000023px;background:#7a63c9;border-radius:2px 2px 0 0"></div>
<div class="a" style="left:977.3399999999999px;top:974.9px;width:23.0px;height:4.100000000000023px;background:#7a63c9;border-radius:2px 2px 0 0"></div>
<div class="a" style="left:1048.06px;top:974.9px;width:23.0px;height:4.100000000000023px;background:#7a63c9;border-radius:2px 2px 0 0"></div>
<div class="a" style="left:1118.78px;top:974.9px;width:23.0px;height:4.100000000000023px;background:#7a63c9;border-radius:2px 2px 0 0"></div>
<div class="a" style="left:1189.5px;top:969.2px;width:23.0px;height:9.799999999999955px;background:#7a63c9;border-radius:2px 2px 0 0"></div>
<div class="a" style="left:1260.22px;top:959px;width:23.0px;height:20px;background:#7a63c9;border-radius:2px 2px 0 0"></div>
<div class="a" style="left:1330.94px;top:939.2px;width:23.0px;height:39.799999999999955px;background:#7a63c9;border-radius:2px 2px 0 0"></div>
<div class="t" style="right:1260.4px;top:1023.5px;font-size:9px;line-height:14px;color:#505050;text-align:right;transform-origin:100% 0;transform:rotate(-45deg);-webkit-text-stroke:0.05px currentColor">購入した商品<br>およびサービス</div>
<div class="t" style="right:1189.68px;top:1023.5px;font-size:9px;line-height:14px;color:#505050;text-align:right;transform-origin:100% 0;transform:rotate(-45deg);-webkit-text-stroke:0.05px currentColor">資本財</div>
<div class="t" style="right:1118.96px;top:1023.5px;font-size:9px;line-height:14px;color:#505050;text-align:right;transform-origin:100% 0;transform:rotate(-45deg);-webkit-text-stroke:0.05px currentColor">燃料・エネルギー</div>
<div class="t" style="right:1048.24px;top:1023.5px;font-size:9px;line-height:14px;color:#505050;text-align:right;transform-origin:100% 0;transform:rotate(-45deg);-webkit-text-stroke:0.05px currentColor">輸送・流通<br>および流通</div>
<div class="t" style="right:977.52px;top:1023.5px;font-size:9px;line-height:14px;color:#505050;text-align:right;transform-origin:100% 0;transform:rotate(-45deg);-webkit-text-stroke:0.05px currentColor">廃棄物発生量<br>事業所内</div>
<div class="t" style="right:906.8px;top:1023.5px;font-size:9px;line-height:14px;color:#505050;text-align:right;transform-origin:100% 0;transform:rotate(-45deg);-webkit-text-stroke:0.05px currentColor">ビジネストラベル</div>
<div class="t" style="right:836.08px;top:1023.5px;font-size:9px;line-height:14px;color:#505050;text-align:right;transform-origin:100% 0;transform:rotate(-45deg);-webkit-text-stroke:0.05px currentColor">社員通勤</div>
<div class="t" style="right:765.36px;top:1023.5px;font-size:9px;line-height:14px;color:#505050;text-align:right;transform-origin:100% 0;transform:rotate(-45deg);-webkit-text-stroke:0.05px currentColor">リース資産</div>
<div class="t" style="right:694.64px;top:1023.5px;font-size:9px;line-height:14px;color:#505050;text-align:right;transform-origin:100% 0;transform:rotate(-45deg);-webkit-text-stroke:0.05px currentColor">購入したエネルギー<br>自家用</div>
<div class="t" style="right:623.92px;top:1023.5px;font-size:9px;line-height:14px;color:#505050;text-align:right;transform-origin:100% 0;transform:rotate(-45deg);-webkit-text-stroke:0.05px currentColor">定常的なソース</div>
<div class="t" style="right:553.1999999999999px;top:1023.5px;font-size:9px;line-height:14px;color:#505050;text-align:right;transform-origin:100% 0;transform:rotate(-45deg);-webkit-text-stroke:0.05px currentColor">モバイルソース</div>
<div class="t" style="right:482.48000000000013px;top:1023.5px;font-size:9px;line-height:14px;color:#505050;text-align:right;transform-origin:100% 0;transform:rotate(-45deg);-webkit-text-stroke:0.05px currentColor">輸送・流通<br>および流通</div>
<div class="t" style="right:411.7600000000001px;top:1023.5px;font-size:9px;line-height:14px;color:#505050;text-align:right;transform-origin:100% 0;transform:rotate(-45deg);-webkit-text-stroke:0.05px currentColor">加工<br>販売製品の</div>
<div class="t" style="right:341.03999999999996px;top:1023.5px;font-size:9px;line-height:14px;color:#505050;text-align:right;transform-origin:100% 0;transform:rotate(-45deg);-webkit-text-stroke:0.05px currentColor">販売した製品の使用</div>
<div class="t" style="right:270.31999999999994px;top:1023.5px;font-size:9px;line-height:14px;color:#505050;text-align:right;transform-origin:100% 0;transform:rotate(-45deg);-webkit-text-stroke:0.05px currentColor">エンドオブライフ・トリートメント<br>販売済み製品の</div>
<div class="t" style="right:199.5999999999999px;top:1023.5px;font-size:9px;line-height:14px;color:#505050;text-align:right;transform-origin:100% 0;transform:rotate(-45deg);-webkit-text-stroke:0.05px currentColor">リース資産</div>
<div class="t" style="right:128.87999999999988px;top:1023.5px;font-size:9px;line-height:14px;color:#505050;text-align:right;transform-origin:100% 0;transform:rotate(-45deg);-webkit-text-stroke:0.05px currentColor">フランチャイズ</div>
<div class="t" style="right:58.159999999999854px;top:1023.5px;font-size:9px;line-height:14px;color:#505050;text-align:right;transform-origin:100% 0;transform:rotate(-45deg);-webkit-text-stroke:0.05px currentColor">インベスターズ</div>
<svg style="left:116.6px;top:1117.3px" width="212.4" height="8"><line x1="0.5" y1="4" x2="211.9" y2="4" stroke="#cfcfcf" stroke-width="1"/><path d="M4 1 L0.8 4 L4 7" fill="none" stroke="#cfcfcf" stroke-width="1"/></svg>
<div class="t" style="left:274px;width:200px;top:1116.8px;font-size:9px;line-height:9px;color:#333;font-weight:normal;letter-spacing:0.65px;text-align:center;-webkit-text-stroke:0.25px currentColor">スコープ3（上流）</div>
<svg style="left:423.4px;top:1117.3px" width="212.60000000000002" height="8"><line x1="0.5" y1="4" x2="212.10000000000002" y2="4" stroke="#cfcfcf" stroke-width="1"/><path d="M208.60000000000002 1 L211.8 4 L208.60000000000002 7" fill="none" stroke="#cfcfcf" stroke-width="1"/></svg>
<svg style="left:641.8px;top:1117.3px" width="8.200000000000045" height="8"><line x1="0.5" y1="4" x2="7.7000000000000455" y2="4" stroke="#cfcfcf" stroke-width="1"/><path d="M4 1 L0.8 4 L4 7" fill="none" stroke="#cfcfcf" stroke-width="1"/></svg>
<div class="t" style="left:578.5px;width:200px;top:1116.8px;font-size:9px;line-height:9px;color:#333;font-weight:normal;letter-spacing:0px;text-align:center;-webkit-text-stroke:0.25px currentColor">スコープ2</div>
<svg style="left:705.8px;top:1117.3px" width="8.400000000000091" height="8"><line x1="0.5" y1="4" x2="7.900000000000091" y2="4" stroke="#cfcfcf" stroke-width="1"/><path d="M4.400000000000091 1 L7.600000000000091 4 L4.400000000000091 7" fill="none" stroke="#cfcfcf" stroke-width="1"/></svg>
<svg style="left:720.7px;top:1117.3px" width="31.59999999999991" height="8"><line x1="0.5" y1="4" x2="31.09999999999991" y2="4" stroke="#cfcfcf" stroke-width="1"/><path d="M4 1 L0.8 4 L4 7" fill="none" stroke="#cfcfcf" stroke-width="1"/></svg>
<div class="t" style="left:680.2px;width:200px;top:1116.8px;font-size:9px;line-height:9px;color:#333;font-weight:normal;letter-spacing:0px;text-align:center;-webkit-text-stroke:0.25px currentColor">スコープ1</div>
<svg style="left:808px;top:1117.3px" width="31.5" height="8"><line x1="0.5" y1="4" x2="31.0" y2="4" stroke="#cfcfcf" stroke-width="1"/><path d="M27.5 1 L30.7 4 L27.5 7" fill="none" stroke="#cfcfcf" stroke-width="1"/></svg>
<svg style="left:844.6px;top:1117.3px" width="205.39999999999998" height="8"><line x1="0.5" y1="4" x2="204.89999999999998" y2="4" stroke="#cfcfcf" stroke-width="1"/><path d="M4 1 L0.8 4 L4 7" fill="none" stroke="#cfcfcf" stroke-width="1"/></svg>
<div class="t" style="left:1002.3px;width:200px;top:1116.8px;font-size:9px;line-height:9px;color:#333;font-weight:normal;letter-spacing:0.65px;text-align:center;-webkit-text-stroke:0.25px currentColor">スコープ3（下流）</div>
<svg style="left:1151.6px;top:1117.3px" width="213.70000000000005" height="8"><line x1="0.5" y1="4" x2="213.20000000000005" y2="4" stroke="#cfcfcf" stroke-width="1"/><path d="M209.70000000000005 1 L212.90000000000003 4 L209.70000000000005 7" fill="none" stroke="#cfcfcf" stroke-width="1"/></svg>
</body></html>
